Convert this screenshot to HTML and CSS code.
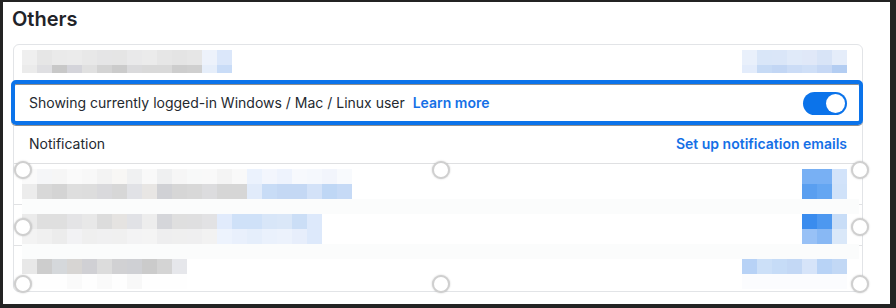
FILE: index.html
```html
<!DOCTYPE html>
<html lang="en">
<head>
<meta charset="utf-8">
<title>Others</title>
<link rel="stylesheet" href="styles.css">
</head>
<body>
<div class="panel">
  <h2 class="title">Others</h2>
  <div class="card-wrap">
    <div class="card">
      <div class="row row-blur">
        <div class="mos-col">
          <div class="mos m1la"></div>
          <div class="mos m1lb"></div>
        </div>
        <div class="mos-col">
          <div class="mos m1ra"></div>
          <div class="mos m1rb"></div>
        </div>
      </div>
      <div class="row row-focus">
        <span class="label">Showing currently logged-in Windows / Mac / Linux user <a class="link learn" href="#">Learn more</a></span>
        <span class="toggle"><span class="knob"></span></span>
      </div>
      <div class="row row-notif">
        <span class="label">Notification</span>
        <a class="link" href="#">Set up notification emails</a>
      </div>
      <div class="sel-area">
        <div class="strip"><div class="mos s1l"></div><div class="mos s1r"></div></div>
        <div class="strip"><div class="mos s2l"></div><div class="mos s2r"></div></div>
        <div class="haze"></div>
        <div class="strip"><div class="mos s4l"></div><div class="mos s4r"></div></div>
        <div class="strip"><div class="mos s5l"></div><div class="mos s5r"></div></div>
        <div class="haze"></div>
        <div class="strip"><div class="mos s7l"></div><div class="mos s7r"></div></div>
        <div class="strip"><div class="mos s8l"></div><div class="mos s8r"></div></div>
      </div>
    </div>
    <span class="handle h-tl"></span>
    <span class="handle h-tm"></span>
    <span class="handle h-tr"></span>
    <span class="handle h-ml"></span>
    <span class="handle h-mr"></span>
    <span class="handle h-bl"></span>
    <span class="handle h-bm"></span>
    <span class="handle h-br"></span>
  </div>
</div>
</body>
</html>
```

FILE: styles.css
```css
html, body {
  margin: 0;
  padding: 0;
}
body {
  background: #232323;
  width: 896px;
  height: 308px;
  overflow: hidden;
  font-family: Inter, "Liberation Sans", sans-serif;
}
.panel {
  margin: 2px 6px 4px 3px;
  height: 302px;
  box-sizing: border-box;
  background: #ffffff;
  padding: 5px 0 0 9px;
}
.title {
  margin: 0;
  font-size: 20px;
  line-height: 24px;
  font-weight: 600;
  color: #1f2329;
}
.card-wrap {
  position: relative;
  margin: 13px 0 0 1px;
  width: 850px;
}
.card {
  border: 1px solid #e2e4e7;
  border-radius: 6px;
}
.row {
  display: flex;
  justify-content: space-between;
  box-sizing: border-box;
}
.row-blur {
  height: 35px;
  padding: 5px 15px 0 8px;
  align-items: flex-start;
}
.mos-col {
  display: flex;
  flex-direction: column;
}
.mos {
  height: 15px;
  flex: none;
}
.row-focus {
  height: 45px;
  margin: 0 -1px 0 -3px;
  border: 4px solid #0b73ea;
  border-radius: 5px;
  padding: 0 12px 0 14px;
  align-items: center;
  box-shadow: inset 0 1px 0 #8e8e8e, 0 1px 0 #8e8e8e;
}
.label {
  font-size: 14px;
  color: #24292f;
}
.link {
  font-size: 14px;
  font-weight: 600;
  color: #1570e6;
  text-decoration: none;
}
.learn {
  margin-left: 4px;
}
.toggle {
  display: flex;
  justify-content: flex-end;
  align-items: center;
  width: 44px;
  height: 23px;
  border-radius: 12px;
  background: #0b73ea;
  box-sizing: border-box;
  padding-right: 2px;
  margin-top: 1px;
}
.knob {
  width: 19px;
  height: 19px;
  border-radius: 50%;
  background: #ffffff;
}
.row-notif {
  height: 38px;
  padding: 0 15px 2px 15px;
  align-items: center;
}
.sel-area {
  border-top: 1px solid #dfe0e2;
  height: 122px;
  overflow: hidden;
  padding-top: 5px;
  box-sizing: content-box;
  border-radius: 0 0 6px 6px;
  background:
    linear-gradient(#e1e2e4, #e1e2e4) 0 35px / 100% 1px no-repeat,
    linear-gradient(#e1e2e4, #e1e2e4) 0 76px / 100% 1px no-repeat;
  background-origin: content-box;
}
.strip {
  display: flex;
  justify-content: space-between;
  padding: 0 15px 0 8px;
  height: 15px;
}
.haze {
  height: 15px;
  margin: 0 3px 0 8px;
  background: #fbfcfc;
}

/* mosaic blocks (15px cells) */
.m1la { width: 210px; background: linear-gradient(90deg, #efefef 0 15px, #e6e6e6 15px 30px, #eaeaea 30px 45px, #ebebeb 45px 60px, #e8e8e8 60px 75px, #e5e5e6 75px 90px, #e5e5e5 90px 105px, #e9e9ea 105px 120px, #ebebeb 120px 135px, #e6e6e6 135px 150px, #e4e4e4 150px 165px, #e6e6e6 165px 180px, #edf2fb 180px 195px, #dbe7fa 195px 210px); }
.m1lb { width: 210px; height: 8px; background: linear-gradient(90deg, #ebebeb 0 15px, #dfdfe2 15px 30px, #c8c8c8 30px 45px, #d4d4da 45px 60px, #e0e0e0 60px 75px, #d3d3d3 75px 90px, #cbcbcb 90px 105px, #dadadc 105px 120px, #d9d9d9 120px 150px, #cdcdcd 150px 165px, #cfcfcf 165px 180px, #e6eefa 180px 195px, #c9dcf7 195px 210px); }
.m1ra { width: 105px; background: linear-gradient(90deg, #e9f0fb 0 15px, #d9e6f8 15px 30px, #dae6f8 30px 45px, #e0eaf9 45px 60px, #e0e8f8 60px 75px, #d8e4f7 75px 90px, #e5edfa 90px 105px); }
.m1rb { width: 105px; height: 8px; background: linear-gradient(90deg, #e3ecfb 0 15px, #c6daf5 15px 30px, #c2d6f4 30px 45px, #cbdcf6 45px 60px, #cfdff7 60px 75px, #c6d8f5 75px 90px, #b3cdf2 90px 105px); }

.s1l { width: 330px; background: linear-gradient(90deg, #fafafa 0 15px, #f5f6f8 15px 30px, #f6f6f6 30px 45px, #fafafa 45px 60px, #f8f8f8 60px 75px, #f3f3f3 75px 90px, #f8f7f5 90px 105px, #f0f1f2 105px 120px, #f9f9f9 120px 135px, #eff0f1 135px 150px, #f6f6f6 150px 165px, #f8f9f9 165px 180px, #f9f9f9 180px 195px, #f4f4f4 195px 210px, #f9f9f9 210px 225px, #ebf2fd 225px 240px, #f3f6fd 240px 255px, #eef3fd 255px 270px, #f7f9fd 270px 285px, #f5f8fd 285px 300px, #f2f5fc 300px 315px, #f8fafd 315px 330px); }
.s1r { width: 45px; background: linear-gradient(90deg, #78b0f4 0 30px, #d2e3fa 30px 45px); }

.s2l { width: 330px; background: linear-gradient(90deg, #ececec 0 15px, #d8d8d8 15px 30px, #d4d4d4 30px 45px, #dedede 45px 60px, #dddddd 60px 75px, #d9d9dc 75px 90px, #d7d7d7 90px 105px, #e1e2e6 105px 120px, #e8e6e4 120px 135px, #d0d1d5 135px 150px, #d6d6d6 150px 165px, #d8d8d8 165px 180px, #dcdcde 180px 195px, #d6d6d6 195px 225px, #e1ebfa 225px 240px, #c8dcf6 240px 255px, #c4d8f4 255px 285px, #d3e2f8 285px 300px, #bfd7f5 300px 315px, #c6daf6 315px 330px); }
.s2r { width: 45px; background: linear-gradient(90deg, #5a9ff0 0 15px, #64a6f2 15px 30px, #d0e2f9 30px 45px); }

.s4l { width: 300px; background: linear-gradient(90deg, #ebebeb 0 15px, #dfdfdf 15px 45px, #e4e4e6 45px 60px, #e8e8e8 60px 75px, #dcdcdc 75px 90px, #e5e3e1 90px 105px, #e1e2e6 105px 120px, #ededed 120px 135px, #d5d6da 135px 150px, #dfdfdf 150px 165px, #dfdfe0 165px 180px, #e2e2e4 180px 195px, #e1ebfc 195px 210px, #cfe1f8 210px 240px, #d8e6f8 240px 255px, #dae7f8 255px 270px, #cbdef6 270px 285px, #dde9fb 285px 300px); }
.s4r { width: 45px; background: linear-gradient(90deg, #3a8cee 0 15px, #4d98f0 15px 30px, #c8ddf7 30px 45px); }

.s5l { width: 300px; background: linear-gradient(90deg, #f3f3f3 0 15px, #f0f0f0 15px 30px, #ececec 30px 45px, #f2f2f4 45px 60px, #efefef 60px 75px, #f0f0f1 75px 90px, #f0f0f0 90px 105px, #f3f3f4 105px 120px, #f4f4f4 120px 135px, #eeeeef 135px 150px, #efefef 150px 165px, #efeff0 165px 180px, #f2f2f2 180px 195px, #edf3fd 195px 210px, #e9f0fc 210px 225px, #e5eefb 225px 240px, #eaf1fc 240px 255px, #ecf2fc 255px 270px, #e7eefb 270px 285px, #dde9fb 285px 300px); }
.s5r { width: 45px; background: linear-gradient(90deg, #98c1f6 0 15px, #88b8f4 15px 30px, #dae8f9 30px 45px); }

.s7l { width: 165px; background: linear-gradient(90deg, #e8e8e8 0 15px, #cdcdcd 15px 30px, #d5d8db 30px 45px, #d7d5d3 45px 60px, #d0d0d4 60px 75px, #dcdcdc 75px 90px, #d1d1d3 90px 105px, #cfd0d4 105px 120px, #cbcbcb 120px 135px, #d4d4d4 135px 150px, #e6e7eb 150px 165px); }
.s7r { width: 105px; background: linear-gradient(90deg, #b7d2f6 0 15px, #cce0f8 15px 30px, #c6dcf7 30px 45px, #c3d8f5 45px 60px, #d6e4f9 60px 75px, #b8d3f6 75px 90px, #c2d8f5 90px 105px); }

.s8l { width: 165px; background: linear-gradient(90deg, #fefefe 0 45px, #fafafa 45px 60px, #fefefe 60px 75px, #fafafa 75px 90px, #fefefe 90px 105px, #f8f8f8 105px 120px, #fefefe 120px 165px); }
.s8r { width: 105px; background: #fbfcfe; }

/* selection handles, overlaid on the card */
.handle {
  position: absolute;
  width: 18px;
  height: 18px;
  box-sizing: border-box;
  border-radius: 50%;
  border: 2px solid #cfcfcf;
  background: #ffffff;
  box-shadow: 0 0 2px rgba(0, 0, 0, 0.2);
}
.h-tl { left: 1px; top: 117px; }
.h-tm { left: 419px; top: 117px; }
.h-tr { left: 838px; top: 117px; }
.h-ml { left: 1px; top: 174px; }
.h-mr { left: 838px; top: 174px; }
.h-bl { left: 1px; top: 231px; }
.h-bm { left: 419px; top: 231px; }
.h-br { left: 838px; top: 231px; }
```
